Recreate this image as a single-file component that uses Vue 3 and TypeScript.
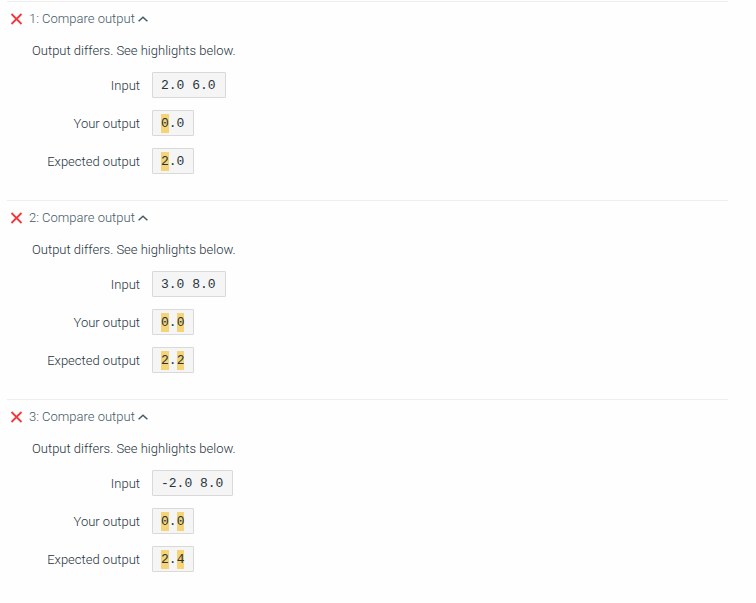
<script setup lang="ts">
import { ref } from 'vue'

interface Piece {
  text: string
  differs?: boolean
}

interface Row {
  label: string
  pieces: Piece[]
}

interface TestCase {
  id: number
  title: string
  rows: Row[]
}

const same = (text: string): Piece => ({ text })
const diff = (text: string): Piece => ({ text, differs: true })

const makeCase = (id: number, input: string, actual: Piece[], expected: Piece[]): TestCase => ({
  id,
  title: 'Compare output',
  rows: [
    { label: 'Input', pieces: [same(input)] },
    { label: 'Your output', pieces: actual },
    { label: 'Expected output', pieces: expected },
  ],
})

const cases: TestCase[] = [
  makeCase(1, '2.0 6.0', [diff('0'), same('.0')], [diff('2'), same('.0')]),
  makeCase(2, '3.0 8.0', [diff('0'), same('.'), diff('0')], [diff('2'), same('.'), diff('2')]),
  makeCase(3, '-2.0 8.0', [diff('0'), same('.'), diff('0')], [diff('2'), same('.'), diff('4')]),
]

const open = ref<Record<number, boolean>>({ 1: true, 2: true, 3: true })

function toggle(id: number): void {
  open.value[id] = !open.value[id]
}
</script>

<template>
  <main class="results">
    <section v-for="test in cases" :key="test.id" class="case">
      <button class="case-header" type="button" :aria-expanded="open[test.id]" @click="toggle(test.id)">
        <svg class="cross" viewBox="0 0 12 12" aria-hidden="true">
          <path d="M1 1L11 11M11 1L1 11" />
        </svg>
        <span>{{ test.id }}: {{ test.title }}</span>
        <svg class="chevron" :class="{ closed: !open[test.id] }" viewBox="0 0 10 6" aria-hidden="true">
          <path d="M0.6 5.2L5 1.2L9.4 5.2" />
        </svg>
      </button>
      <div v-if="open[test.id]" class="case-body">
        <p class="message">Output differs. See highlights below.</p>
        <dl class="rows">
          <template v-for="row in test.rows" :key="row.label">
            <dt>{{ row.label }}</dt>
            <dd>
              <pre class="value"><span v-for="(piece, i) in row.pieces" :key="i" :class="{ differs: piece.differs }">{{ piece.text }}</span></pre>
            </dd>
          </template>
        </dl>
      </div>
    </section>
  </main>
</template>

<style>
body {
  background: #fefefe;
}
</style>

<style scoped>
.results {
  padding: 1px 28px 0 7px;
  color: #26343c;
  font-family: Roboto, "Liberation Sans", sans-serif;
  font-size: 13px;
  font-weight: 300;
  line-height: 18px;
}

.case {
  padding: 8px 0 26px;
  border-top: 1px solid #eeeeee;
}

.case-header {
  display: flex;
  align-items: center;
  padding: 0 3px;
  border: 0;
  background: none;
  color: #455a64;
  font: inherit;
  cursor: pointer;
}

.cross {
  width: 13px;
  height: 12px;
  margin-right: 6px;
  fill: none;
  stroke: #f0383c;
  stroke-width: 1.8;
}

.chevron {
  width: 10px;
  height: 6px;
  margin-left: 3px;
  fill: none;
  stroke: #455a64;
  stroke-width: 1.5;
}

.chevron.closed {
  transform: rotate(180deg);
}

.case-body {
  padding: 14px 0 0 25px;
}

.message {
  margin: 0 0 12px;
}

.rows {
  display: grid;
  grid-template-columns: 108px 1fr;
  column-gap: 12px;
  row-gap: 12px;
  margin: 0;
}

dt {
  padding-top: 5px;
  text-align: right;
}

dd {
  display: flex;
  margin: 0;
}

.value {
  margin: 0;
  padding: 3px 9px 2px 8px;
  border: 1px solid #d9d9d9;
  border-radius: 1px;
  background: #f5f5f5;
  font-family: "Liberation Mono", monospace;
  font-size: 13px;
  font-weight: 400;
  line-height: 19px;
}

.value span {
  display: inline-block;
}

.differs {
  background: #f5d376;
}
</style>
